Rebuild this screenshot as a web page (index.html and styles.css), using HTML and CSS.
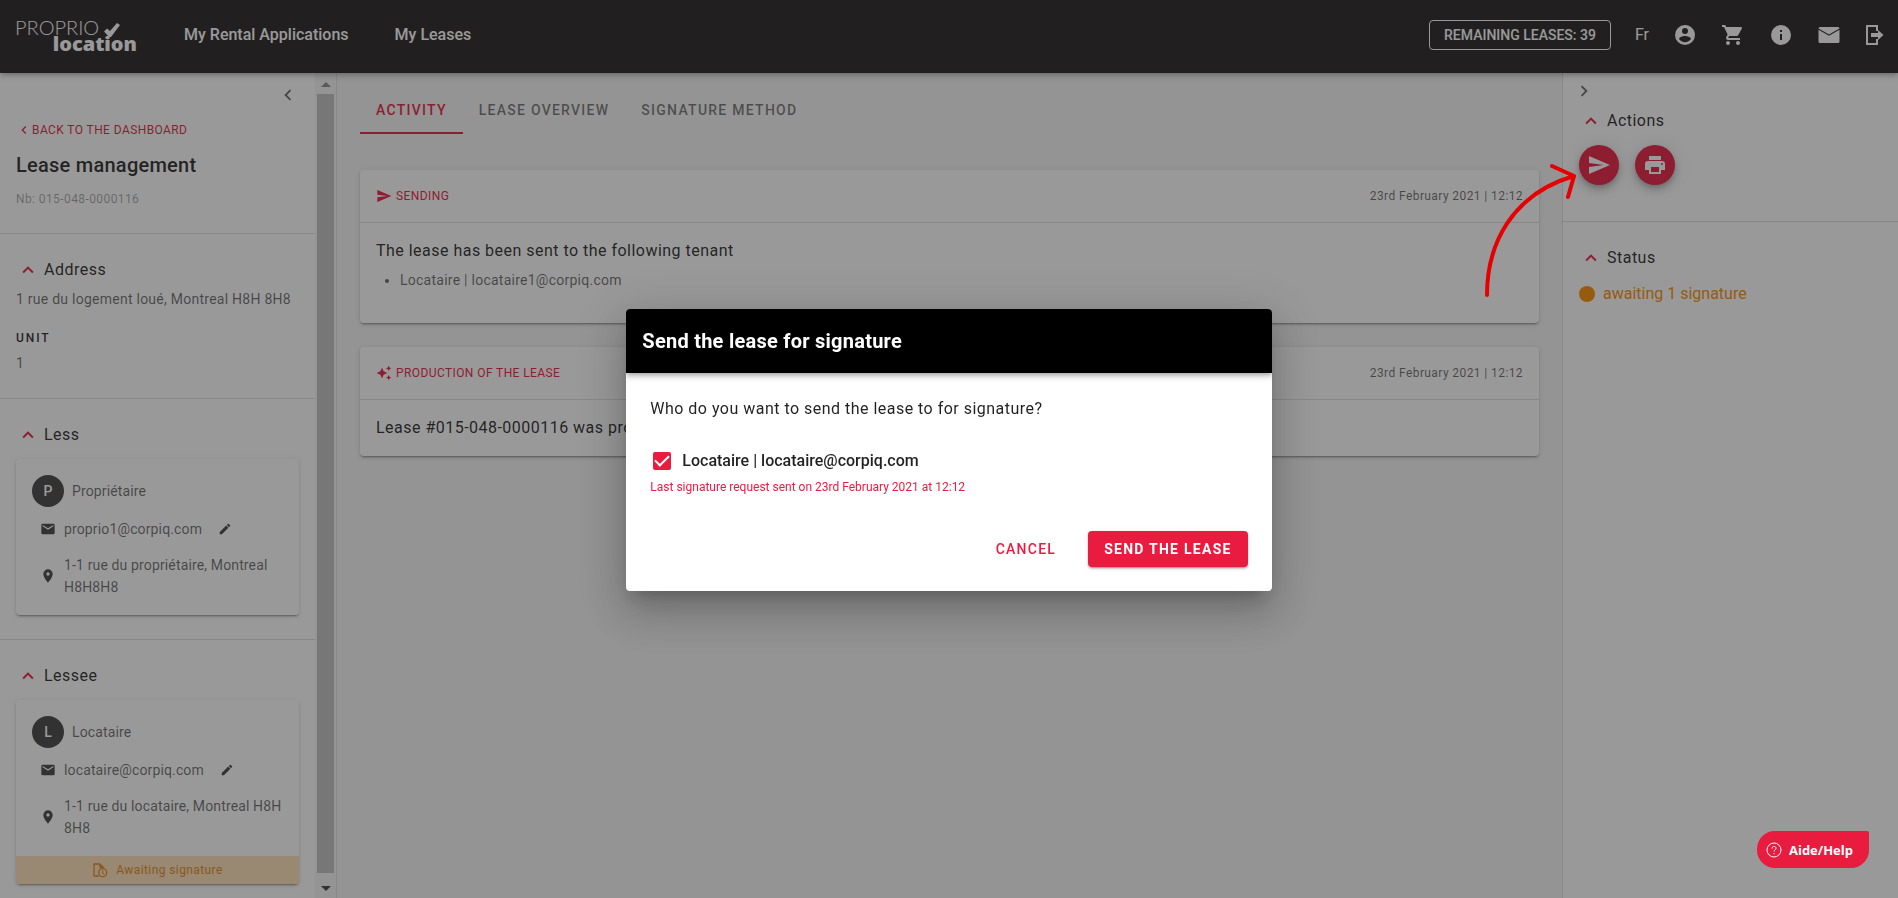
FILE: index.html
```
<!DOCTYPE html>
<html lang="en">
<head>
    <meta charset="UTF-8">
    <meta name="viewport" content="width=device-width, initial-scale=1.0">
    <title>Lease management</title>
    <link rel="stylesheet" href="styles.css">
</head>
<body>
    <!-- shared icons -->
    <svg class="sprite" aria-hidden="true">
        <symbol id="i-account" viewBox="0 0 24 24"><path d="M12,19.2C9.5,19.2 7.29,17.92 6,16C6.03,14 10,12.9 12,12.9C14,12.9 17.97,14 18,16C16.71,17.92 14.5,19.2 12,19.2M12,5A3,3 0 0,1 15,8A3,3 0 0,1 12,11A3,3 0 0,1 9,8A3,3 0 0,1 12,5M12,2A10,10 0 0,0 2,12A10,10 0 0,0 12,22A10,10 0 0,0 22,12C22,6.47 17.5,2 12,2Z"/></symbol>
        <symbol id="i-cart" viewBox="0 0 24 24"><path d="M17,18C15.89,18 15,18.89 15,20A2,2 0 0,0 17,22A2,2 0 0,0 19,20C19,18.89 18.1,18 17,18M1,2V4H3L6.6,11.59L5.24,14.04C5.09,14.32 5,14.65 5,15A2,2 0 0,0 7,17H19V15H7.42A0.25,0.25 0 0,1 7.17,14.75C7.17,14.7 7.18,14.66 7.2,14.63L8.1,13H15.55C16.3,13 16.96,12.58 17.3,11.97L20.88,5.5C20.95,5.34 21,5.17 21,5A1,1 0 0,0 20,4H5.21L4.27,2M7,18C5.89,18 5,18.89 5,20A2,2 0 0,0 7,22A2,2 0 0,0 9,20C9,18.89 8.1,18 7,18Z"/></symbol>
        <symbol id="i-info" viewBox="0 0 24 24"><path d="M13,9H11V7H13M13,17H11V11H13M12,2A10,10 0 0,0 2,12A10,10 0 0,0 12,22A10,10 0 0,0 22,12A10,10 0 0,0 12,2Z"/></symbol>
        <symbol id="i-mail" viewBox="0 0 24 24"><path d="M3 4H21A1.5 1.5 0 0 1 22.500 5.500L12 11.500L1.500 5.500A1.500 1.500 0 0 1 3 4M1.500 6.700L12 12.800L22.500 6.700V18.500A1.500 1.500 0 0 1 21 20H3A1.500 1.500 0 0 1 1.500 18.500Z"/></symbol>
        <symbol id="i-email" viewBox="0 0 24 24"><path d="M20,8L12,13L4,8V6L12,11L20,6M20,4H4C2.89,4 2,4.89 2,6V18A2,2 0 0,0 4,20H20A2,2 0 0,0 22,18V6C22,4.89 21.1,4 20,4Z"/></symbol>
        <symbol id="i-logout" viewBox="0 0 24 24"><path d="M1 2H13V8H11V4H3V20H11V16H13V22H1ZM6 10H13V7L18.500 12L13 17V14H6Z"/></symbol>
        <symbol id="i-left" viewBox="0 0 24 24"><path d="M15.41,16.58L10.83,12L15.41,7.41L14,6L8,12L14,18L15.41,16.58Z"/></symbol>
        <symbol id="i-right" viewBox="0 0 24 24"><path d="M8.59,16.58L13.17,12L8.59,7.41L10,6L16,12L10,18L8.59,16.58Z"/></symbol>
        <symbol id="i-up" viewBox="0 0 24 24"><path d="M7.41,15.41L12,10.83L16.59,15.41L18,14L12,8L6,14L7.41,15.41Z"/></symbol>
        <symbol id="i-send" viewBox="0 0 24 24"><path d="M2,21L23,12L2,3V10L17,12L2,14V21Z"/></symbol>
        <symbol id="i-print" viewBox="0 0 24 24"><path d="M18,3H6V7H18M19,12A1,1 0 0,1 18,11A1,1 0 0,1 19,10A1,1 0 0,1 20,11A1,1 0 0,1 19,12M16,19H8V14H16M19,8H5A3,3 0 0,0 2,11V17H6V21H18V17H22V11A3,3 0 0,0 19,8Z"/></symbol>
        <symbol id="i-pencil" viewBox="0 0 24 24"><path d="M20.71,7.04C21.1,6.65 21.1,6 20.71,5.63L18.37,3.29C18,2.9 17.35,2.9 16.96,3.29L15.12,5.12L18.87,8.87M3,17.25V21H6.75L17.81,9.93L14.06,6.18L3,17.25Z"/></symbol>
        <symbol id="i-marker" viewBox="0 0 24 24"><path d="M12,11.5A2.5,2.5 0 0,1 9.5,9A2.5,2.5 0 0,1 12,6.5A2.5,2.5 0 0,1 14.5,9A2.5,2.5 0 0,1 12,11.5M12,2A7,7 0 0,0 5,9C5,14.25 12,22 12,22C12,22 19,14.25 19,9A7,7 0 0,0 12,2Z"/></symbol>
        <symbol id="i-sparkle" viewBox="0 0 24 24"><path d="M9 4L11.500 9.500L17 12L11.500 14.500L9 20L6.500 14.500L1 12L6.500 9.500ZM19 1L20.200 3.800L23 5L20.200 6.200L19 9L17.800 6.200L15 5L17.800 3.800ZM19 15L20.200 17.800L23 19L20.200 20.200L19 23L17.800 20.200L15 19L17.800 17.800Z"/></symbol>
        <symbol id="i-file-clock" viewBox="0 0 24 24"><path d="M3 2H12L18 8V9.200H16V9H11V4H4V20H9.500L10.500 22H3A1 1 0 0 1 2 21V3A1 1 0 0 1 3 2Z"/><path fill-rule="evenodd" d="M16 9A7 7 0 1 0 16 23A7 7 0 1 0 16 9M16 11A5 5 0 1 1 16 21A5 5 0 1 1 16 11M15.200 12.500H16.700V16L19 18L18 19L15.200 16.600Z"/></symbol>
    </svg>

    <header class="app-bar">
        <a class="logo" href="#" aria-label="Proprio location">
            <span class="logo-top">PROPRIO
                <svg class="logo-check" viewBox="0 0 16 14"><path d="M0 8.500L3 5.500L6 8L13 0L16 2L7 14H5Z"/></svg>
            </span>
            <span class="logo-bottom">location</span>
        </a>
        <nav class="main-nav">
            <a href="#">My Rental Applications</a>
            <a href="#">My Leases</a>
        </nav>
        <div class="tools">
            <button class="remaining" type="button">REMAINING LEASES: 39</button>
            <a class="lang" href="#">Fr</a>
            <a href="#" aria-label="Account"><svg class="icon"><use href="#i-account"/></svg></a>
            <a href="#" aria-label="Cart"><svg class="icon"><use href="#i-cart"/></svg></a>
            <a href="#" aria-label="Information"><svg class="icon"><use href="#i-info"/></svg></a>
            <a href="#" aria-label="Messages"><svg class="icon"><use href="#i-mail"/></svg></a>
            <a href="#" aria-label="Log out"><svg class="icon"><use href="#i-logout"/></svg></a>
        </div>
    </header>

    <div class="layout">
        <aside class="sidebar">
            <div class="sidebar-content">
                <section class="panel panel-intro">
                    <button class="collapse" type="button" aria-label="Collapse"><svg class="icon icon-md"><use href="#i-left"/></svg></button>
                    <a class="back" href="#"><svg class="icon icon-sm"><use href="#i-left"/></svg>BACK TO THE DASHBOARD</a>
                    <h1>Lease management</h1>
                    <p class="number">Nb: 015-048-0000116</p>
                </section>
                <section class="panel panel-address">
                    <h2><svg class="icon icon-md"><use href="#i-up"/></svg>Address</h2>
                    <p class="muted">1 rue du logement loué, Montreal H8H 8H8</p>
                    <h3>UNIT</h3>
                    <p class="muted">1</p>
                </section>
                <section class="panel">
                    <h2><svg class="icon icon-md"><use href="#i-up"/></svg>Less</h2>
                    <div class="card person">
                        <div class="person-name"><span class="avatar">P</span>Propriétaire</div>
                        <div class="person-row"><svg class="icon icon-sm"><use href="#i-email"/></svg>proprio1@corpiq.com
                            <button class="edit" type="button" aria-label="Edit"><svg class="icon icon-xs"><use href="#i-pencil"/></svg></button></div>
                        <div class="person-row"><svg class="icon icon-sm"><use href="#i-marker"/></svg><span>1-1 rue du propriétaire, Montreal H8H8H8</span></div>
                    </div>
                </section>
                <section class="panel">
                    <h2><svg class="icon icon-md"><use href="#i-up"/></svg>Lessee</h2>
                    <div class="card person">
                        <div class="person-name"><span class="avatar">L</span>Locataire</div>
                        <div class="person-row"><svg class="icon icon-sm"><use href="#i-email"/></svg>locataire@corpiq.com
                            <button class="edit" type="button" aria-label="Edit"><svg class="icon icon-xs"><use href="#i-pencil"/></svg></button></div>
                        <div class="person-row"><svg class="icon icon-sm"><use href="#i-marker"/></svg><span>1-1 rue du locataire, Montreal H8H 8H8</span></div>
                        <div class="person-status"><svg class="icon icon-sm"><use href="#i-file-clock"/></svg>Awaiting signature</div>
                    </div>
                </section>
            </div>
            <div class="scrollbar" aria-hidden="true">
                <span class="arrow-up"></span>
                <span class="thumb"></span>
                <span class="arrow-down"></span>
            </div>
        </aside>

        <main class="content">
            <nav class="tabs">
                <a class="active" href="#">ACTIVITY</a>
                <a href="#">LEASE OVERVIEW</a>
                <a href="#">SIGNATURE METHOD</a>
            </nav>
            <article class="card event">
                <header><span class="event-type"><svg class="icon icon-sm"><use href="#i-send"/></svg>SENDING</span><time>23rd February 2021 | 12:12</time></header>
                <div class="event-body">
                    <p>The lease has been sent to the following tenant</p>
                    <ul>
                        <li>Locataire | locataire1@corpiq.com</li>
                    </ul>
                </div>
            </article>
            <article class="card event">
                <header><span class="event-type"><svg class="icon icon-sm"><use href="#i-sparkle"/></svg>PRODUCTION OF THE LEASE</span><time>23rd February 2021 | 12:12</time></header>
                <div class="event-body">
                    <p>Lease #015-048-0000116 was produced</p>
                </div>
            </article>
        </main>

        <aside class="drawer">
            <section class="panel panel-actions">
                <button class="collapse" type="button" aria-label="Collapse"><svg class="icon icon-md"><use href="#i-right"/></svg></button>
                <h2><svg class="icon icon-md"><use href="#i-up"/></svg>Actions</h2>
                <div class="fabs">
                    <button class="fab" type="button" aria-label="Send"><svg class="icon"><use href="#i-send"/></svg></button>
                    <button class="fab" type="button" aria-label="Print"><svg class="icon"><use href="#i-print"/></svg></button>
                </div>
            </section>
            <section class="panel">
                <h2><svg class="icon icon-md"><use href="#i-up"/></svg>Status</h2>
                <p class="status"><span class="dot"></span>awaiting 1 signature</p>
            </section>
        </aside>
    </div>

    <div class="overlay">
        <form class="dialog" role="dialog" aria-labelledby="dialog-title">
            <h2 id="dialog-title">Send the lease for signature</h2>
            <div class="dialog-body">
                <p>Who do you want to send the lease to for signature?</p>
                <label class="check" for="tenant"><input type="checkbox" id="tenant" checked>Locataire | locataire@corpiq.com</label>
                <p class="hint">Last signature request sent on 23rd February 2021 at 12:12</p>
                <div class="dialog-actions">
                    <button class="btn-text" type="button">CANCEL</button>
                    <button class="btn-primary" type="button">SEND THE LEASE</button>
                </div>
            </div>
        </form>
    </div>

    <!-- arrow pointing at the send button -->
    <svg class="pointer" viewBox="0 0 96 140" aria-hidden="true"><path d="M5 133C5 82 30 32 92 14M70 4L92 14L86 35"/></svg>

    <button class="help" type="button">
        <svg viewBox="0 0 16 16"><circle cx="8" cy="8" r="7"/><path d="M6 6.500C6 3.700 10.100 3.800 10 6.300C10 7.900 8 7.800 8 9.600M8 11V12.200"/></svg>
        Aide/Help
    </button>
</body>
</html>
```
FILE: styles.css
```
* { box-sizing: border-box; }
body {
    margin: 0;
    height: 100vh;
    display: flex;
    flex-direction: column;
    overflow: hidden;
    font-family: Roboto, sans-serif;
    font-size: 16px;
    line-height: 24px;
    color: rgba(0, 0, 0, 0.87);
    background-color: #f5f5f5;
}
h1, h2, h3, p, ul { margin: 0; padding: 0; }
a { color: inherit; text-decoration: none; }
button {
    border: 0;
    padding: 0;
    background: none;
    color: inherit;
    font-family: inherit;
    cursor: pointer;
}
.sprite { display: none; }
.icon { display: block; flex: none; width: 24px; height: 24px; fill: currentColor; }
.icon-md { width: 22px; height: 22px; }
.icon-sm { width: 16px; height: 16px; }
.icon-xs { width: 14px; height: 14px; }

/* top bar */
.app-bar {
    position: relative;
    z-index: 1;
    flex: none;
    display: flex;
    align-items: center;
    height: 73px;
    padding: 0 9px 4px 15px;
    color: #fff;
    background-color: #231f20;
    box-shadow: 0 2px 4px -1px rgba(0, 0, 0, 0.2), 0 4px 5px rgba(0, 0, 0, 0.14);
}
.logo { display: flex; flex-direction: column; width: 122px; }
.logo-top { display: flex; gap: 4px; font-family: Lato, sans-serif; font-size: 20px; font-weight: 300; line-height: 17px; }
.logo-check { width: 18px; height: 14px; margin-top: 4px; fill: currentColor; }
.logo-bottom { align-self: flex-end; font-family: "Open Sans", sans-serif; font-size: 20px; font-weight: 800; line-height: 14px; }
.main-nav { display: flex; gap: 46px; margin-left: 47px; font-weight: 500; }
.tools { display: flex; align-items: center; gap: 24px; margin-left: auto; }
.remaining {
    height: 30px;
    padding: 0 14px;
    border: 1px solid #fff;
    border-radius: 4px;
    font-size: 14px;
    font-weight: 500;
}

/* columns */
.layout { flex: 1; display: flex; min-height: 0; }
.panel { padding: 24px 16px; border-bottom: 1px solid rgba(0, 0, 0, 0.12); }
.panel:last-child { border-bottom: 0; }
.panel h2 {
    display: flex;
    align-items: center;
    gap: 5px;
    padding-left: 1px;
    font-size: 16px;
    font-weight: 400;
    line-height: 24px;
    letter-spacing: 0.03em;
}
.panel h2 .icon { color: #e91b3f; }
.collapse { display: block; color: rgba(0, 0, 0, 0.6); }
.card {
    border-radius: 4px;
    background-color: #fff;
    box-shadow: 0 3px 1px -2px rgba(0, 0, 0, 0.2), 0 2px 2px rgba(0, 0, 0, 0.14), 0 1px 5px rgba(0, 0, 0, 0.12);
}
.muted { color: rgba(0, 0, 0, 0.6); font-size: 14px; line-height: 22px; letter-spacing: 0.018em; }

.sidebar {
    flex: none;
    display: flex;
    width: 337px;
    border-right: 1px solid rgba(0, 0, 0, 0.12);
    background-color: #fff;
}
.sidebar-content { flex: 1; overflow: hidden; }
.panel-intro { padding-top: 11px; }
.panel-intro .collapse { margin-left: auto; }
.back {
    display: flex;
    align-items: center;
    margin-top: 14px;
    color: #e91b3f;
    font-size: 12px;
    line-height: 20px;
    letter-spacing: 0.034em;
}
h1 { margin-top: 9px; font-size: 20px; font-weight: 500; line-height: 32px; letter-spacing: 0.0125em; }
.number { margin-top: 8px; color: rgba(0, 0, 0, 0.38); font-size: 12px; line-height: 20px; letter-spacing: 0.034em; }
.panel-address .muted { margin-top: 6px; }
.panel-address h3 + .muted { margin-top: 4px; }
h3 { margin-top: 18px; font-size: 12px; font-weight: 500; line-height: 20px; letter-spacing: 0.16em; }

.person {
    margin-top: 12px;
    padding-top: 16px;
    overflow: hidden;
    color: rgba(0, 0, 0, 0.6);
    font-size: 14px;
    line-height: 22px;
    letter-spacing: 0.01em;
}
.person-name { display: flex; align-items: center; gap: 8px; padding-left: 16px; }
.avatar {
    width: 32px;
    height: 32px;
    border-radius: 50%;
    background-color: #424242;
    color: #fff;
    font-weight: 500;
    line-height: 32px;
    text-align: center;
}
.person-row { display: flex; align-items: center; gap: 8px; padding: 11px 16px 3px 24px; }
.person-row .icon { color: #424242; }
.person-row + .person-row { padding-bottom: 17px; }
.edit { margin-left: 8px; }
.person-status {
    display: flex;
    align-items: center;
    justify-content: center;
    gap: 8px;
    height: 28px;
    background-color: #ffdfb8;
    color: #e18a1a;
    font-size: 12px;
    letter-spacing: 0.034em;
}

.scrollbar {
    flex: none;
    display: flex;
    flex-direction: column;
    align-items: center;
    width: 21px;
    padding: 9px 0 7px;
    background-color: #f5f5f5;
}
.arrow-up, .arrow-down { border: 5px solid transparent; }
.arrow-up { border-top: 0; border-bottom-color: #8a8a8a; }
.arrow-down { border-bottom: 0; border-top-color: #424242; }
.thumb { flex: 1; width: 17px; margin: 7px 0 13px; background-color: #c1c1c1; }

.content { flex: 1; min-width: 0; padding: 13px 23px; }
.tabs { display: flex; margin-bottom: 36px; }
.tabs a {
    height: 48px;
    padding: 0 16px;
    border-bottom: 2px solid transparent;
    color: rgba(0, 0, 0, 0.54);
    font-size: 14px;
    font-weight: 500;
    line-height: 48px;
    letter-spacing: 0.09em;
}
.tabs .active { color: #e91b3f; border-color: #e91b3f; }
.event { margin-bottom: 24px; }
.event header {
    display: flex;
    align-items: center;
    justify-content: space-between;
    height: 53px;
    padding: 0 16px;
    border-bottom: 1px solid rgba(0, 0, 0, 0.12);
    font-size: 12px;
    letter-spacing: 0.034em;
}
.event-type { display: flex; align-items: center; gap: 4px; color: #e91b3f; }
.event time { color: rgba(0, 0, 0, 0.6); }
.event-body { padding: 16px; letter-spacing: 0.03em; }
.event ul {
    margin: 6px 0 16px;
    padding-left: 24px;
    color: rgba(0, 0, 0, 0.6);
    font-size: 14px;
    line-height: 22px;
    letter-spacing: 0.018em;
}

.drawer {
    flex: none;
    width: 336px;
    border-left: 1px solid rgba(0, 0, 0, 0.12);
    background-color: #fff;
}
.panel-actions { padding-top: 7px; padding-bottom: 36px; }
.drawer .collapse { margin-left: -6px; }
.panel-actions h2 { margin-top: 7px; }
.fabs { display: flex; gap: 16px; margin-top: 12px; }
.fab {
    display: flex;
    align-items: center;
    justify-content: center;
    width: 40px;
    height: 40px;
    border-radius: 50%;
    background-color: #e91b3f;
    color: #fff;
    box-shadow: 0 3px 5px -1px rgba(0, 0, 0, 0.2), 0 6px 10px rgba(0, 0, 0, 0.14), 0 1px 18px rgba(0, 0, 0, 0.12);
}
.status { display: flex; align-items: center; gap: 8px; margin-top: 12px; color: #fb8c00; }
.dot { width: 16px; height: 16px; border-radius: 50%; background-color: #fb8c00; }

/* dialog */
.overlay {
    position: fixed;
    inset: 0;
    z-index: 2;
    display: flex;
    align-items: center;
    justify-content: center;
    padding-top: 2px;
    background-color: rgba(33, 33, 33, 0.46);
}
.dialog {
    width: 34%;
    border-radius: 4px;
    overflow: hidden;
    background-color: #fff;
    box-shadow: 0 11px 15px -7px rgba(0, 0, 0, 0.2), 0 24px 38px 3px rgba(0, 0, 0, 0.14), 0 9px 46px 8px rgba(0, 0, 0, 0.12);
}
.dialog h2 {
    padding: 0 16px;
    background-color: #000;
    color: #fff;
    font-size: 20px;
    font-weight: 700;
    line-height: 64px;
    letter-spacing: 0.0125em;
    box-shadow: 0 2px 4px -1px rgba(0, 0, 0, 0.2), 0 4px 5px rgba(0, 0, 0, 0.14), 0 1px 10px rgba(0, 0, 0, 0.12);
}
.dialog-body { padding: 24px; letter-spacing: 0.03em; }
.check { display: flex; align-items: center; gap: 11px; margin-top: 28px; padding-left: 3px; font-weight: 500; letter-spacing: normal; }
.check input {
    appearance: none;
    display: grid;
    place-items: center;
    width: 18px;
    height: 18px;
    margin: 0;
    border-radius: 2px;
    background-color: #e91b3f;
}
.check input::after {
    content: "";
    width: 12px;
    height: 6px;
    margin-bottom: 4px;
    border: solid #fff;
    border-width: 0 0 2px 2px;
    rotate: -45deg;
}
.dialog .hint { margin-top: 4px; color: #e91b3f; font-size: 12px; line-height: 20px; letter-spacing: normal; }
.dialog-actions { display: flex; justify-content: flex-end; gap: 16px; margin-top: 34px; }
.btn-text, .btn-primary { height: 36px; padding: 0 16px; border-radius: 4px; font-size: 14px; font-weight: 500; letter-spacing: 0.09em; }
.btn-text { color: #e91b3f; }
.btn-primary {
    background-color: #e91b3f;
    color: #fff;
    font-weight: 700;
    box-shadow: 0 3px 1px -2px rgba(0, 0, 0, 0.2), 0 2px 2px rgba(0, 0, 0, 0.14), 0 1px 5px rgba(0, 0, 0, 0.12);
}

.pointer {
    position: fixed;
    top: 162px;
    right: 320px;
    z-index: 3;
    width: 96px;
    height: 140px;
    fill: none;
    stroke: #e60000;
    stroke-width: 4;
    stroke-linecap: round;
    stroke-linejoin: round;
}
.help {
    position: fixed;
    right: 29px;
    bottom: 30px;
    z-index: 3;
    display: flex;
    align-items: center;
    gap: 7px;
    height: 37px;
    padding: 0 16px 0 9px;
    border-radius: 18px 2px 18px 18px;
    background-color: #e91b3f;
    color: #fff;
    font-family: "Open Sans", sans-serif;
    font-size: 13px;
    font-weight: 700;
}
.help svg { width: 16px; height: 16px; fill: none; stroke: currentColor; }
```
